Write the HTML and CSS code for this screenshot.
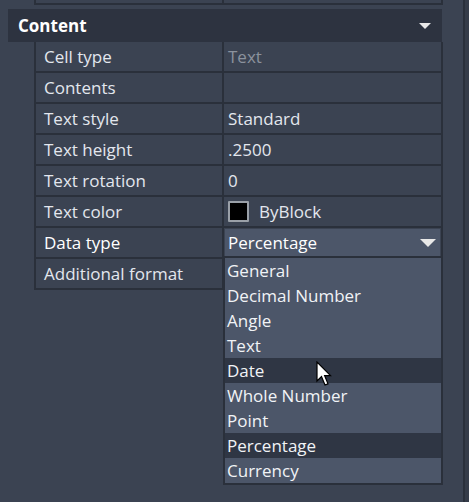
FILE: index.html
```html
<!DOCTYPE html>
<html>
<head>
  <title>Properties</title>
  <link rel="stylesheet" href="styles.css">
</head>
<body>
  <div class="palette">
    <div class="main">
      <div class="stub">
        <div class="cell"></div>
        <div class="cell"></div>
      </div>

      <div class="section-head">
        <span>Content</span>
        <span class="caret"></span>
      </div>

      <div class="grid">
        <div class="cell label">Cell type</div>
        <div class="cell value muted">Text</div>

        <div class="cell label">Contents</div>
        <div class="cell value"></div>

        <div class="cell label">Text style</div>
        <div class="cell value">Standard</div>

        <div class="cell label">Text height</div>
        <div class="cell value">.2500</div>

        <div class="cell label">Text rotation</div>
        <div class="cell value">0</div>

        <div class="cell label">Text color</div>
        <div class="cell value"><span class="swatch"></span>ByBlock</div>

        <div class="cell label active">Data type</div>
        <div class="cell value combo-cell">
          <div class="combo">
            <span>Percentage</span>
            <span class="caret"></span>
          </div>
          <ul class="dropdown">
            <li>General</li>
            <li>Decimal Number</li>
            <li>Angle</li>
            <li>Text</li>
            <li class="hover">Date</li>
            <li>Whole Number</li>
            <li>Point</li>
            <li class="selected">Percentage</li>
            <li>Currency</li>
          </ul>
          <!-- mouse pointer over the list -->
          <svg class="pointer" width="18" height="26" viewBox="0 0 18 26">
            <path d="M1 1 L1 20 L5.5 15.5 L9 24 L12 22.8 L8.6 14.6 L14.5 14.6 Z" fill="#fff" stroke="#000" stroke-width="1.2" stroke-linejoin="miter"/>
          </svg>
        </div>

        <div class="cell label">Additional format</div>
        <div class="cell value"></div>
      </div>
    </div>
    <div class="edge"></div>
  </div>
</body>
</html>
```

FILE: styles.css
```css
body {
  margin: 0;
  padding: 0;
  background-color: #3b4352;
  font-family: "Open Sans", "Noto Sans", sans-serif;
  font-size: 17px;
  color: #e3e7ee;
}

.palette {
  display: flex;
  height: 502px;
}

.main {
  width: 463px;
}

.edge {
  width: 6px;
  border-left: 2px solid #2a303b;
  background-color: #353c49;
  box-sizing: border-box;
}

/* bottom of the section above */
.stub {
  display: grid;
  grid-template-columns: 186px 217px;
  column-gap: 2px;
  margin-left: 34px;
  width: 409px;
  padding: 0 2px 2px 2px;
  box-sizing: border-box;
  background-color: #2a303b;
}

.stub .cell {
  height: 3px;
  background-color: #3b4352;
}

.section-head {
  display: flex;
  align-items: center;
  justify-content: space-between;
  margin: 4px 0 0 8px;
  width: 434px;
  height: 33px;
  padding: 0 11px 0 10px;
  box-sizing: border-box;
  background-color: #2d3340;
  font-weight: bold;
  font-size: 17px;
  color: #fff;
}

.caret {
  width: 0;
  height: 0;
  border-left: 6px solid transparent;
  border-right: 6px solid transparent;
  border-top: 6px solid #e8e8e8;
}

.grid {
  display: grid;
  grid-template-columns: 186px 217px;
  grid-auto-rows: 29px;
  gap: 2px;
  margin-left: 34px;
  width: 409px;
  padding: 0 2px 2px 2px;
  box-sizing: border-box;
  background-color: #2a303b;
}

.cell {
  display: flex;
  align-items: center;
  background-color: #3b4352;
  white-space: nowrap;
}

.label {
  padding-left: 8px;
}

.label.active {
  color: #fff;
}

.value {
  padding-left: 4px;
}

.muted {
  color: #8b929d;
}

.swatch {
  width: 17px;
  height: 17px;
  margin-right: 10px;
  background-color: #000;
  border: 2px solid #9aa0a8;
  border-radius: 1px;
}

.combo-cell {
  position: relative;
  padding: 1px;
  align-items: stretch;
}

.combo {
  flex: 1;
  display: flex;
  align-items: center;
  justify-content: space-between;
  padding: 0 4px 0 3px;
  background-color: #4c5669;
  color: #fff;
}

.combo .caret {
  border-left-width: 8px;
  border-right-width: 8px;
  border-top-width: 8px;
}

.dropdown {
  position: absolute;
  top: 28px;
  left: -1px;
  width: 220px;
  margin: 0;
  padding: 0;
  list-style: none;
  border: 2px solid #2a303b;
  box-sizing: border-box;
  background-color: #4c5669;
  z-index: 2;
}

.dropdown li {
  height: 25px;
  line-height: 25px;
  padding-left: 2px;
  color: #f1f3f6;
}

.dropdown li.hover,
.dropdown li.selected {
  background-color: #2f3644;
}

.pointer {
  position: absolute;
  top: 133px;
  left: 92px;
  z-index: 3;
}
```
